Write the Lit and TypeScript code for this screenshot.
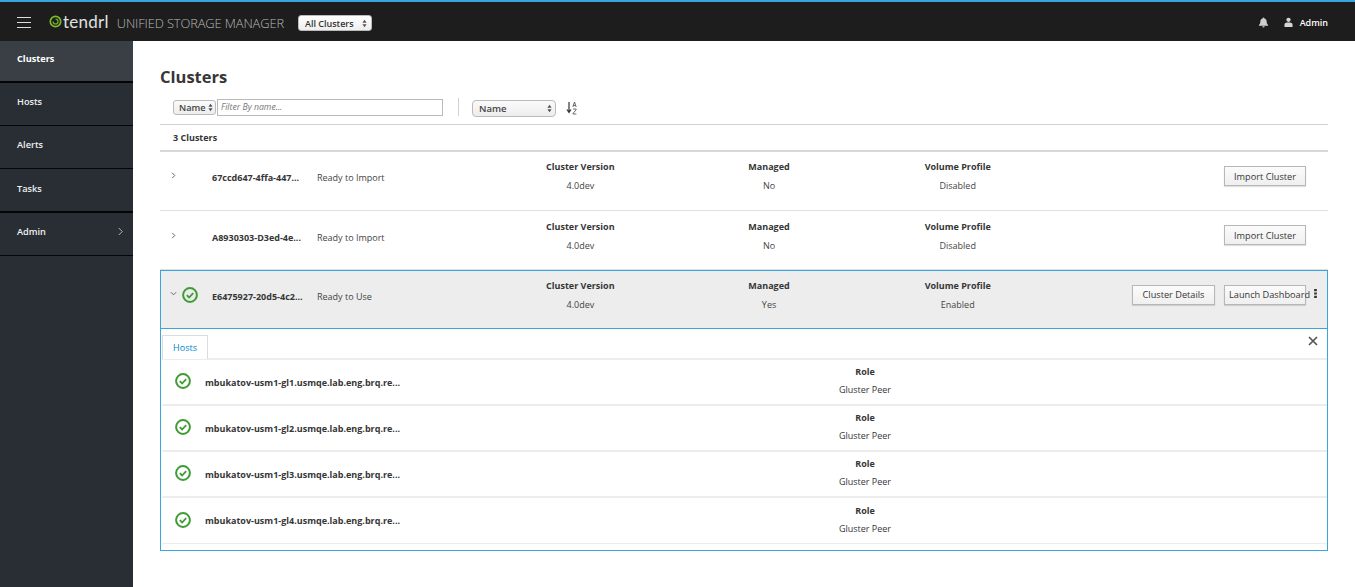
import { LitElement, html, css } from "lit";
import { customElement } from "lit/decorators.js";

const check = () => html`<svg class="check" viewBox="0 0 16 16" width="16" height="16"><circle cx="8" cy="8" r="6.9" fill="none" stroke="#3f9c35" stroke-width="2"/><path d="M4.8 8.2l2.3 2.3 4.1-4.4" fill="none" stroke="#3f9c35" stroke-width="1.8"/></svg>`;
const updown = (c = "#4d5258") => html`<svg class="updown" viewBox="0 0 6 10" width="5" height="9"><path d="M3 0.5L5.500 4H0.500zM3 9.500L0.500 6h5z" fill="${c}"/></svg>`;

const clusters = [
  { id: "67ccd647-4ffa-447...", status: "Ready to Import", managed: "No", profile: "Disabled", ok: false },
  { id: "A8930303-D3ed-4e...", status: "Ready to Import", managed: "No", profile: "Disabled", ok: false },
  { id: "E6475927-20d5-4c2...", status: "Ready to Use", managed: "Yes", profile: "Enabled", ok: true },
];
const hosts = ["gl1", "gl2", "gl3", "gl4"];

@customElement("app-root")
export class AppRoot extends LitElement {
  static styles = css`
    :host { display: block; height: 587px; width: 1355px; overflow: hidden; font-family: "Open Sans", "Liberation Sans", sans-serif; font-size: 9px; color: #363636; background: #fff; }
    .top { height: 36px; padding-top: 3px; background: #1d1d1d; border-top: 2px solid #39a5dc; display: flex; align-items: center; color: #fff; }
    .burger { width: 14px; height: 11px; margin-left: 17px; margin-top: -2px; border-top: 1px solid #ddd; border-bottom: 1px solid #ddd; box-sizing: border-box; }
    .burger i { display: block; height: 1px; background: #ddd; margin-top: 4px; }
    .logo { margin-left: 18px; display: flex; align-items: center; gap: 1px; margin-top: -3px; }
    .logoword { font-family: "Lato", sans-serif; font-size: 17px; font-weight: 400; letter-spacing: .25px; color: #e0e0e0; line-height: 20px; }
    .product { font-size: 12.9px; font-weight: 300; color: #b8b8b8; margin-left: 8px; letter-spacing: -.12px; white-space: nowrap; }
    .allsel { margin-left: 14px; width: 74px; height: 16px; box-sizing: border-box; border-radius: 3px; background: linear-gradient(#fff, #eee); border: 1px solid #bbb; color: #333; display: flex; align-items: center; justify-content: space-between; padding: 0 4px 0 6px; font-size: 9px; font-weight: 600; }
    .right { margin-left: auto; display: flex; align-items: center; padding-right: 27px; font-size: 9px; font-weight: 600; margin-top: -2px; }
    .right svg { display: block; }
    .right .user { margin-left: 15px; margin-right: 7px; }
    .body { display: flex; height: 546px; }
    nav { width: 133px; background: #292e34; flex: none; color: #fff; }
    .item { height: 43px; box-sizing: border-box; border-bottom: 1px solid #050505; padding: 12px 17px 0; font-size: 9.2px; font-weight: 600; display: flex; justify-content: space-between; color: #f0f0f0; }
    .item.active { background: #393f44; height: 42px; border-bottom: 2px solid #050505; padding-top: 11px; font-weight: 700; color: #fff; }
    .item.thick { border-bottom-width: 2px; height: 44px; padding-top: 13px; }
    .item svg { margin: 2px -8px 0 0; }
    main { flex: 1; padding: 26px 27px 0; min-width: 0; }
    h1 { margin: 0; font-size: 16.5px; line-height: 20px; font-weight: 700; color: #363636; }
    .toolbar { display: flex; align-items: center; height: 18px; margin-top: 11px; padding-left: 13px; }
    .namesel { width: 43px; height: 15px; box-sizing: border-box; border: 1px solid #bbb; border-radius: 3px; background: linear-gradient(#fafafa, #ededed); display: flex; align-items: center; justify-content: space-between; padding: 0 2px 0 5px; font-size: 9.2px; font-weight: 600; color: #444; }
    .filter { width: 226px; height: 17px; box-sizing: border-box; border: 1px solid #bbb; margin-left: 1px; padding-left: 3px; font-size: 8.7px; font-style: italic; color: #777; display: flex; align-items: center; }
    .vsep { width: 1px; height: 18px; background: #d1d1d1; margin: 0 13px 0 15px; }
    .sortsel { width: 84px; height: 17px; margin-top: 2px; box-sizing: border-box; border: 1px solid #bbb; border-radius: 4px; background: linear-gradient(#fafafa, #ededed); display: flex; align-items: center; justify-content: space-between; padding: 0 3px 0 6px; font-size: 9.5px; font-weight: 600; color: #444; }
    .sorticon { margin-left: 10px; margin-top: 2px; display: block; }
    .count { margin-top: 8px; height: 28px; box-sizing: border-box; border-top: 1px solid #d1d1d1; border-bottom: 2px solid #d8d8d8; padding: 7px 0 0 13px; font-size: 9px; font-weight: 700; line-height: 12px; color: #363636; }
    .row { height: 59px; box-sizing: border-box; border-bottom: 1px solid #e0e0e0; display: flex; align-items: center; }
    .row.mid { padding-top: 2px; }
    .row.mid .actions { margin-top: -12px; }
    .row.sel { background: #ededed; border: 1px solid #39a5dc; }
    .lead { width: 52px; flex: none; display: flex; align-items: center; padding-left: 10px; box-sizing: border-box; height: 100%; }
    .row.sel .lead { width: 51px; padding-left: 9px; }
    .lead svg.chev { flex: none; margin-top: -12px; }
    .lead .check { margin-left: 5px; margin-top: -9px; flex: none; }
    .name { width: 105px; flex: none; font-weight: 700; color: #363636; white-space: nowrap; line-height: 12px; margin-top: -6px; }
    .status { width: 169px; flex: none; white-space: nowrap; line-height: 12px; color: #444; margin-top: -6px; }
    .col { width: 188.7px; flex: none; text-align: center; line-height: 12px; margin-top: -9px; }
    .col b { display: block; font-weight: 700; margin-bottom: 7px; color: #363636; }
    .col span { color: #444; }
    .actions { flex: 1; display: flex; justify-content: flex-end; gap: 9px; margin-top: -10px; }
    .btn { width: 82px; height: 20px; box-sizing: border-box; border: 1px solid #b7b7b7; background: linear-gradient(#fbfbfb, #efefef); box-shadow: 0 1px 1px rgba(0,0,0,.12); font-size: 9.2px; font-weight: 500; color: #363636; display: flex; align-items: center; justify-content: center; white-space: nowrap; }
    .btn.details { width: 83px; }
    .btn.wide { justify-content: flex-start; padding-left: 4px; }
    .tail { width: 22px; flex: none; display: flex; justify-content: center; margin-top: -5px; }
    .row.sel .tail { width: 21px; }
    .row.sel .tail svg { margin-right: 3px; margin-top: -8px; }
    .panel { height: 222px; box-sizing: border-box; border: 1px solid #39a5dc; border-top: none; padding-left: 1px; }
    .tabs { height: 31px; box-sizing: border-box; border-bottom: 2px solid #ededed; display: flex; align-items: flex-end; justify-content: space-between; }
    .tab { width: 46px; height: 24px; box-sizing: border-box; border: 1px solid #dcdcdc; border-bottom: none; color: #0088ce; font-size: 9px; display: flex; align-items: center; justify-content: center; margin-bottom: -1px; background: #fff; }
    .close { margin: 0 9px 12px 0; display: block; }
    .host { height: 46px; box-sizing: border-box; border-bottom: 2px solid #ededed; display: flex; align-items: center; }
    .host:last-child { border-bottom-width: 1px; }
    .host .check { margin-left: 13px; margin-top: -2px; }
    .host .hname { width: 435px; margin-left: 14px; font-weight: 700; flex: none; white-space: nowrap; }
    .hrole { width: 450px; text-align: center; line-height: 12px; flex: none; padding-left: 2px; box-sizing: border-box; margin-left: -1px; margin-top: -2px; }
    .hrole b { display: block; font-weight: 700; margin-bottom: 6px; }
  `;

  private chevron(open: boolean) {
    return html`<svg class="chev" viewBox="0 0 8 8" width="7" height="7"><path d="${open ? "M1 2.500l3 3 3-3" : "M2.500 1l3 3-3 3"}" fill="none" stroke="#4d5258" stroke-width="1"/></svg>`;
  }

  render() {
    return html`
      <div class="top">
        <div class="burger"><i></i></div>
        <div class="logo">
          <svg viewBox="0 0 14 14" width="13" height="13"><circle cx="7" cy="7" r="5.600" fill="none" stroke="#7db928" stroke-width="1.800"/><path d="M7 4.300a2.700 2.700 0 1 1-2.700 2.700" fill="none" stroke="#7db928" stroke-width="1.300"/></svg>
          <span class="logoword">tendrl</span>
        </div>
        <span class="product">UNIFIED STORAGE MANAGER</span>
        <div class="allsel"><span>All Clusters</span>${updown("#555")}</div>
        <div class="right">
          <svg viewBox="0 0 12 12" width="11" height="11"><path d="M6 0.500a1 1 0 0 1 1 1c2 .5 2.500 2 2.500 4 0 1.500.7 2.500 1.500 3.300V9.500H1v-.7C1.800 8 2.500 7 2.500 5.500c0-2 .5-3.500 2.500-4a1 1 0 0 1 1-1zM4.700 10.200h2.600a1.300 1.300 0 0 1-2.600 0z" fill="#cfcfcf"/></svg>
          <svg class="user" viewBox="0 0 10 12" width="9" height="11"><circle cx="5" cy="3" r="2.400" fill="#d5d5d5"/><path d="M0.500 11V8.400C.5 6.800 2 6 3.500 6h3C8 6 9.500 6.800 9.500 8.400V11z" fill="#d5d5d5"/></svg>
          <span>Admin</span>
        </div>
      </div>
      <div class="body">
        <nav>
          <div class="item active">Clusters</div>
          <div class="item">Hosts</div>
          <div class="item">Alerts</div>
          <div class="item thick">Tasks</div>
          <div class="item">Admin<svg viewBox="0 0 8 10" width="7" height="9"><path d="M2 1l4 4-4 4" fill="none" stroke="#c8c8c8" stroke-width="1"/></svg></div>
        </nav>
        <main>
          <h1>Clusters</h1>
          <div class="toolbar">
            <div class="namesel"><span>Name</span>${updown()}</div>
            <div class="filter">Filter By name...</div>
            <div class="vsep"></div>
            <div class="sortsel"><span>Name</span>${updown()}</div>
            <svg class="sorticon" viewBox="0 0 12 14" width="12" height="14"><path d="M3 1v10M1 8.500l2 3 2-3" fill="none" stroke="#333" stroke-width="1.200"/><path d="M6.800 6l1.700-5 1.700 5M7.400 4.500h2.200M7 8h3.200v.6L7 12.500v.5h3.400" fill="none" stroke="#444" stroke-width=".8"/></svg>
          </div>
          <div class="count">3 Clusters</div>
          ${clusters.map((c, i) => html`
            <div class="row ${c.ok ? "sel" : ""} ${i === 1 ? "mid" : ""}">
              <div class="lead">${this.chevron(c.ok)}${c.ok ? check() : ""}</div>
              <div class="name">${c.id}</div>
              <div class="status">${c.status}</div>
              <div class="col"><b>Cluster Version</b><span>4.0dev</span></div>
              <div class="col"><b>Managed</b><span>${c.managed}</span></div>
              <div class="col"><b>Volume Profile</b><span>${c.profile}</span></div>
              <div class="actions">
                ${c.ok
                  ? html`<div class="btn details">Cluster Details</div><div class="btn wide">Launch Dashboard</div>`
                  : html`<div class="btn">Import Cluster</div>`}
              </div>
              <div class="tail">${c.ok ? html`<svg viewBox="0 0 3 10" width="3" height="9"><path d="M0 0h3v2.400H0zM0 3.800h3v2.400H0zM0 7.600h3V10H0z" fill="#333"/></svg>` : ""}</div>
            </div>`)}
          <div class="panel">
            <div class="tabs">
              <div class="tab">Hosts</div>
              <svg class="close" viewBox="0 0 10 10" width="10" height="10"><path d="M1 1l8 8M9 1l-8 8" stroke="#555" stroke-width="1.700" fill="none"/></svg>
            </div>
            ${hosts.map((h) => html`
              <div class="host">
                ${check()}
                <div class="hname">mbukatov-usm1-${h}.usmqe.lab.eng.brq.re...</div>
                <div class="hrole"><b>Role</b><span>Gluster Peer</span></div>
              </div>`)}
          </div>
        </main>
      </div>
    `;
  }
}
